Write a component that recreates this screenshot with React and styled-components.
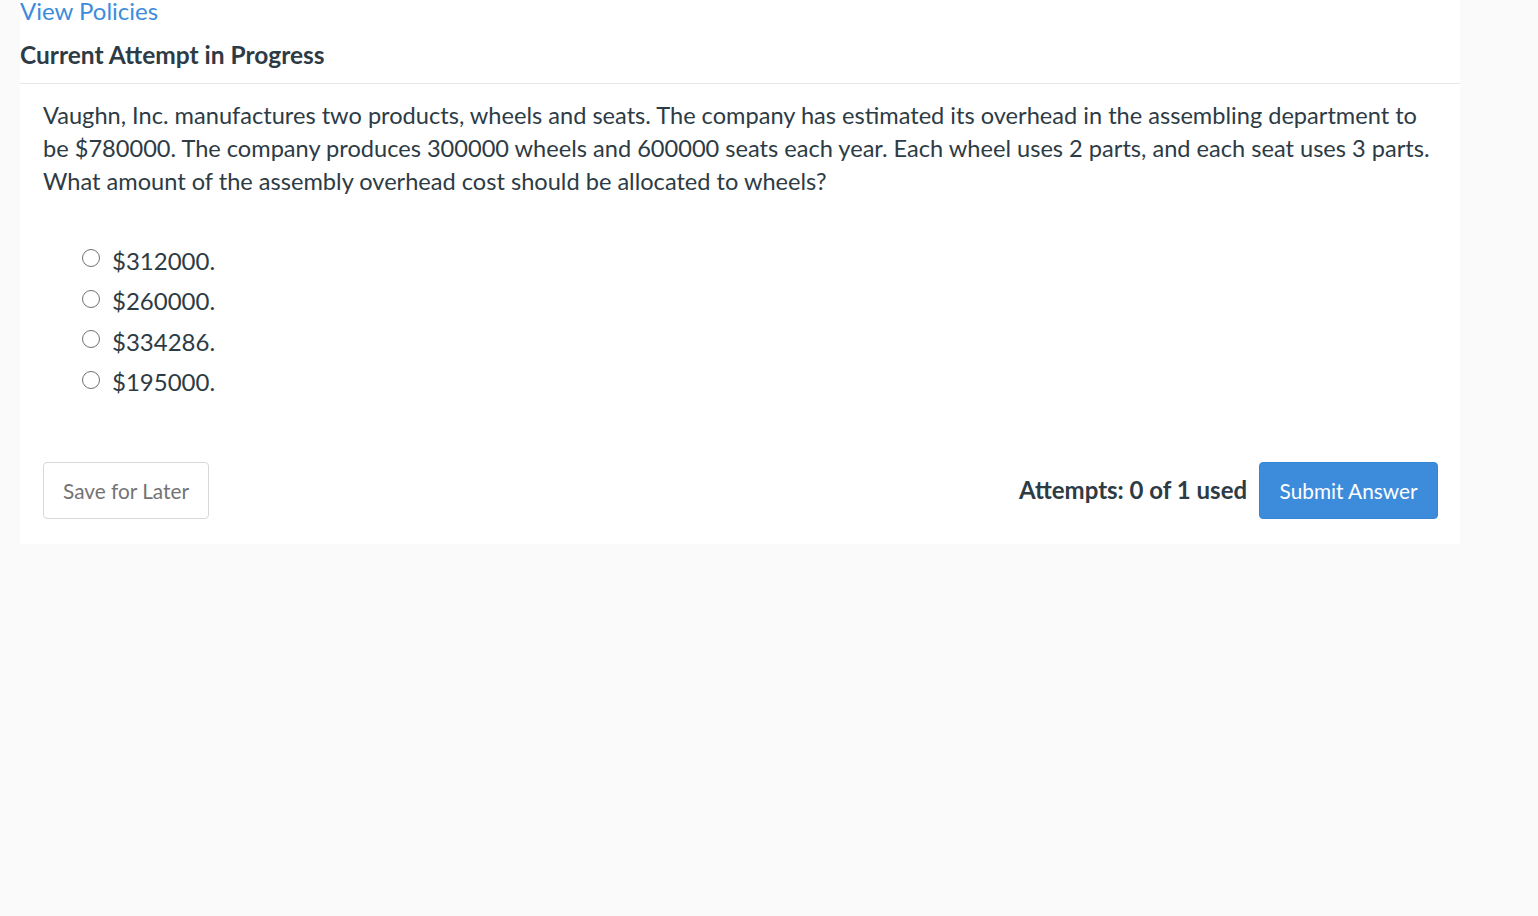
import styled, { createGlobalStyle } from "styled-components";

const GlobalStyle = createGlobalStyle`
  html, body {
    margin: 0;
    padding: 0;
    background: #fafafa;
    font-family: Lato, "Liberation Sans", sans-serif;
    color: #2d3b45;
  }
`;

const options = ["$312000.", "$260000.", "$334286.", "$195000."];

const App = () => {
  return (
    <>
      <GlobalStyle />
      <Page>
        <Panel>
          <Header>
            <PolicyLink href="#">View Policies</PolicyLink>
            <Title>Current Attempt in Progress</Title>
          </Header>
          <Body>
            <Question>
              Vaughn, Inc. manufactures two products, wheels and seats. The company has
              estimated its overhead in the assembling department to be $780000. The company
              produces 300000 wheels and 600000 seats each year. Each wheel uses 2 parts, and
              each seat uses 3 parts. What amount of the assembly overhead cost should be
              allocated to wheels?
            </Question>
            <Choices>
              {options.map((o) => (
                <Choice key={o}>
                  <Radio type="radio" name="answer" />
                  <span>{o}</span>
                </Choice>
              ))}
            </Choices>
            <Footer>
              <SaveButton>Save for Later</SaveButton>
              <Actions>
                <Attempts>Attempts: 0 of 1 used</Attempts>
                <SubmitButton>Submit Answer</SubmitButton>
              </Actions>
            </Footer>
          </Body>
        </Panel>
      </Page>
    </>
  );
};

const Page = styled.div`
  min-height: 916px;
  padding: 0 78px 0 20px;
`;

const Panel = styled.div`
  background: #fff;
  width: 1440px;
  margin-top: -4px;
`;

const Header = styled.div`
  display: flex;
  flex-direction: column;
  border-bottom: 1px solid #e8e8e8;
  padding-bottom: 13px;
`;

const PolicyLink = styled.a`
  font-size: 24px;
  line-height: 30px;
  color: #3d8cdc;
  text-decoration: none;
`;

const Title = styled.h2`
  margin: 14px 0 0;
  font-size: 24.5px;
  line-height: 30px;
  font-weight: 700;
  color: #2d3b45;
`;

const Body = styled.div`
  padding: 15px 22px 25px 23px;
`;

const Question = styled.p`
  margin: 0;
  font-size: 23.6px;
  line-height: 33px;
`;

const Choices = styled.div`
  display: flex;
  flex-direction: column;
  padding: 42px 0 0 39px;
`;

const Choice = styled.label`
  display: flex;
  align-items: center;
  gap: 12px;
  height: 40.5px;
  font-size: 24px;
`;

const Radio = styled.input`
  appearance: none;
  margin: 0;
  width: 18px;
  height: 18px;
  border: 1.5px solid #707070;
  border-radius: 50%;
  background: #fff;
  position: relative;
  top: -2px;
`;

const Footer = styled.div`
  display: flex;
  align-items: center;
  justify-content: space-between;
  margin-top: 60px;
`;

const SaveButton = styled.button`
  height: 57px;
  padding: 0 19px;
  background: #fff;
  border: 1px solid #d8d8d8;
  border-radius: 4px;
  font-family: inherit;
  font-size: 20.8px;
  color: #737373;
`;

const Actions = styled.div`
  display: flex;
  align-items: center;
  gap: 12px;
`;

const Attempts = styled.span`
  font-size: 24px;
  font-weight: 700;
  margin-top: -3px;
`;

const SubmitButton = styled.button`
  height: 57px;
  padding: 0 19.5px;
  background: #3d8cdc;
  border: 1px solid #3785d6;
  border-radius: 4px;
  font-family: inherit;
  font-size: 20.8px;
  color: #fff;
`;

export default App;
